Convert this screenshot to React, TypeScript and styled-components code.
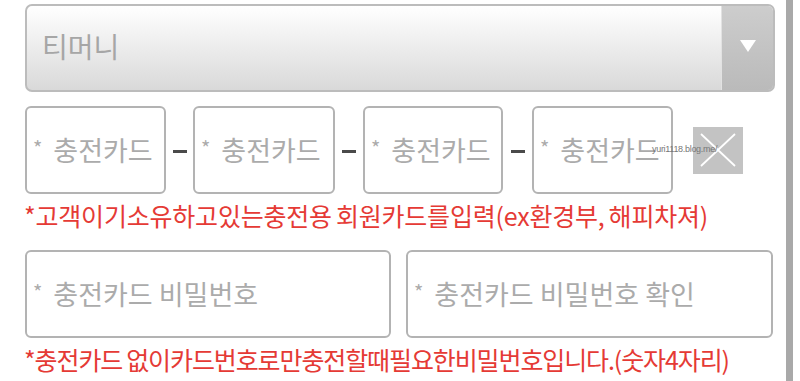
import React from "react";
import styled, { createGlobalStyle } from "styled-components";

const Global = createGlobalStyle`
  html, body { margin: 0; padding: 0; background: #fff; }
  body { font-family: "Noto Sans CJK KR", "Noto Sans", sans-serif; }
`;

const Page = styled.div`
  display: flex;
  width: 800px;
  height: 381px;
  overflow: hidden;
  background: #fff;
`;

const Content = styled.div`
  display: flex;
  flex-direction: column;
  width: 750px;
  margin-left: 25px;
  padding-top: 4px;
`;

const ScrollBar = styled.div`
  width: 7px;
  margin-left: 11px;
  background: #a9a9a9;
  height: 100%;
`;

const Select = styled.div`
  display: flex;
  height: 88px;
  box-sizing: border-box;
  border: 2px solid #bcbcbc;
  border-radius: 7px;
  overflow: hidden;
  background: linear-gradient(#ffffff, #d9d9d9);
`;

const SelectText = styled.div`
  flex: 1;
  display: flex;
  align-items: center;
  padding-left: 15px;
  font-size: 28px;
  color: #a6a6a6;
  padding-bottom: 4px;
`;

const SelectArrow = styled.div`
  width: 51px;
  display: flex;
  align-items: center;
  justify-content: center;
  border-left: 1px solid #e2e2e2;
  background: linear-gradient(#cdcdcd, #bababa);
  padding-bottom: 4px;
`;

const Row = styled.div<{ $top: number }>`
  display: flex;
  align-items: center;
  margin-top: ${(p) => p.$top}px;
  position: relative;
`;

const Field = styled.div<{ $w: number }>`
  width: ${(p) => p.$w}px;
  height: 88px;
  box-sizing: border-box;
  border: 2px solid #b3b3b3;
  border-radius: 6px;
  display: flex;
  align-items: center;
  padding-left: 6px;
  font-size: 27px;
  color: #ababab;
  white-space: nowrap;
  overflow: hidden;
  padding-bottom: 2px;
`;

const Star = styled.span`
  font-size: 20px;
  margin-right: 11px;
  position: relative;
  top: -2px;
`;

const Dash = styled.div<{ $w: number }>`
  width: ${(p) => p.$w}px;
  display: flex;
  justify-content: center;
`;

const DashBar = styled.span`
  display: block;
  width: 14px;
  height: 3px;
  background: #4a4a4a;
  margin-top: 2px;
`;

const ClearButton = styled.div`
  width: 50px;
  height: 47px;
  margin-left: 20px;
  background: #c3c3c3;
  display: flex;
  align-items: center;
  justify-content: center;
`;

const Watermark = styled.span`
  position: absolute;
  left: 627px;
  top: 38px;
  font-family: "Liberation Sans", Arial, sans-serif;
  font-size: 9px;
  color: #777;
  letter-spacing: -0.3px;
`;

const Notice = styled.div<{ $top: number; $spacing: number }>`
  margin-top: ${(p) => p.$top}px;
  color: #e53a35;
  font-size: 25px;
  letter-spacing: ${(p) => p.$spacing}px;
  line-height: 28px;
  white-space: nowrap;
  margin-left: -1px;
`;

const Gap = styled.span`
  display: inline-block;
  width: 4px;
`;

const PasswordRow = styled.div`
  display: flex;
  gap: 15px;
  margin-top: 21px;
`;

const fieldLabel = "충전카드";

export default function App() {
  return (
    <>
      <Global />
      <Page>
        <Content>
          <Select>
            <SelectText>티머니</SelectText>
            <SelectArrow>
              <svg width="18" height="14" viewBox="0 0 18 14">
                <polygon points="1,1 17,1 9,13" fill="#ffffff" />
              </svg>
            </SelectArrow>
          </Select>

          <Row $top={14}>
            <Field $w={141}><Star>*</Star>{fieldLabel}</Field>
            <Dash $w={27}><DashBar /></Dash>
            <Field $w={142}><Star>*</Star>{fieldLabel}</Field>
            <Dash $w={28}><DashBar /></Dash>
            <Field $w={140}><Star>*</Star>{fieldLabel}</Field>
            <Dash $w={29}><DashBar /></Dash>
            <Field $w={141}><Star>*</Star>{fieldLabel}</Field>
            <ClearButton>
              <svg width="40" height="38" viewBox="0 0 40 38">
                <path d="M3 3 L37 35 M37 3 L3 35" stroke="#ffffff" strokeWidth="1.8" />
              </svg>
            </ClearButton>
            <Watermark>yuri1118.blog.me/</Watermark>
          </Row>

          <Notice $top={7} $spacing={-0.2}>
            *고객이기소유하고있는충전용<Gap />회원카드를입력(ex환경부,<Gap />해피차져)
          </Notice>

          <PasswordRow>
            <Field $w={366}><Star>*</Star>충전카드 비밀번호</Field>
            <Field $w={367}><Star>*</Star>충전카드 비밀번호 확인</Field>
          </PasswordRow>

          <Notice $top={7} $spacing={-1.1}>
            *충전카드<Gap />없이카드번호로만충전할때필요한비밀번호입니다.(숫자4자리)
          </Notice>
        </Content>
        <ScrollBar />
      </Page>
    </>
  );
}
